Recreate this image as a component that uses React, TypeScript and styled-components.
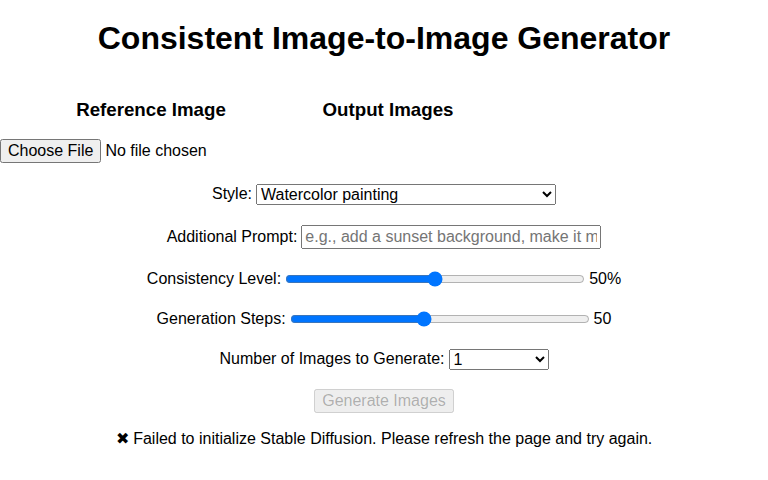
import React from 'react';
import styled, { createGlobalStyle } from 'styled-components';

const GlobalStyle = createGlobalStyle`
  body {
    margin: 0;
    font-family: "Liberation Sans", Arial, sans-serif;
    color: #000;
    background: #fff;
  }
`;

const Page = styled.div`
  display: flex;
  flex-direction: column;
`;

const Title = styled.h1`
  margin: 20px 0 0;
  font-size: 32px;
  font-weight: 700;
  text-align: center;
`;

const Columns = styled.div`
  display: flex;
  margin-top: 42px;
`;

const Column = styled.div<{ $width: number }>`
  width: ${(p) => p.$width}px;
  display: flex;
  flex-direction: column;
`;

const ColumnTitle = styled.h2`
  margin: 0;
  font-size: 18.72px;
  font-weight: 700;
  text-align: center;
`;

const FileInput = styled.input`
  margin-top: 18px;
  font: 16px "Liberation Sans", Arial, sans-serif;
`;

const Row = styled.div<{ $gap: number }>`
  display: flex;
  justify-content: center;
  align-items: center;
  gap: 4px;
  height: 24px;
  margin-top: ${(p) => p.$gap}px;
  font-size: 16px;
`;

const Select = styled.select<{ $width: number }>`
  width: ${(p) => p.$width}px;
  font: 16px "Liberation Sans", Arial, sans-serif;
`;

const TextInput = styled.input`
  width: 300px;
  box-sizing: border-box;
  font: 16px "Liberation Sans", Arial, sans-serif;
  &::placeholder {
    color: #757575;
  }
`;

const Slider = styled.input`
  width: 300px;
  margin: 0;
`;

const Button = styled.button`
  font: 16px "Liberation Sans", Arial, sans-serif;
`;

const ErrorText = styled.div`
  font-size: 16px;
`;

export default function App() {
  return (
    <Page>
      <GlobalStyle />
      <Title>Consistent Image-to-Image Generator</Title>
      <Columns>
        <Column $width={302}>
          <ColumnTitle>Reference Image</ColumnTitle>
          <FileInput type="file" />
        </Column>
        <Column $width={172}>
          <ColumnTitle>Output Images</ColumnTitle>
        </Column>
      </Columns>
      <Row $gap={19}>
        <span>Style:</span>
        <Select $width={300} defaultValue="watercolor">
          <option value="watercolor">Watercolor painting</option>
          <option value="oil">Oil painting</option>
          <option value="sketch">Pencil sketch</option>
        </Select>
      </Row>
      <Row $gap={19}>
        <span>Additional Prompt:</span>
        <TextInput type="text" placeholder="e.g., add a sunset background, make it more vibrant" />
      </Row>
      <Row $gap={18}>
        <span>Consistency Level:</span>
        <Slider type="range" min={0} max={100} defaultValue={50} />
        <span>50%</span>
      </Row>
      <Row $gap={16}>
        <span>Generation Steps:</span>
        <Slider type="range" min={10} max={100} defaultValue={50} />
        <span>50</span>
      </Row>
      <Row $gap={16}>
        <span>Number of Images to Generate:</span>
        <Select $width={100} defaultValue="1">
          <option value="1">1</option>
          <option value="2">2</option>
          <option value="3">3</option>
          <option value="4">4</option>
        </Select>
      </Row>
      <Row $gap={18}>
        <Button disabled>Generate Images</Button>
      </Row>
      <Row $gap={13}>
        <ErrorText>✖ Failed to initialize Stable Diffusion. Please refresh the page and try again.</ErrorText>
      </Row>
    </Page>
  );
}
